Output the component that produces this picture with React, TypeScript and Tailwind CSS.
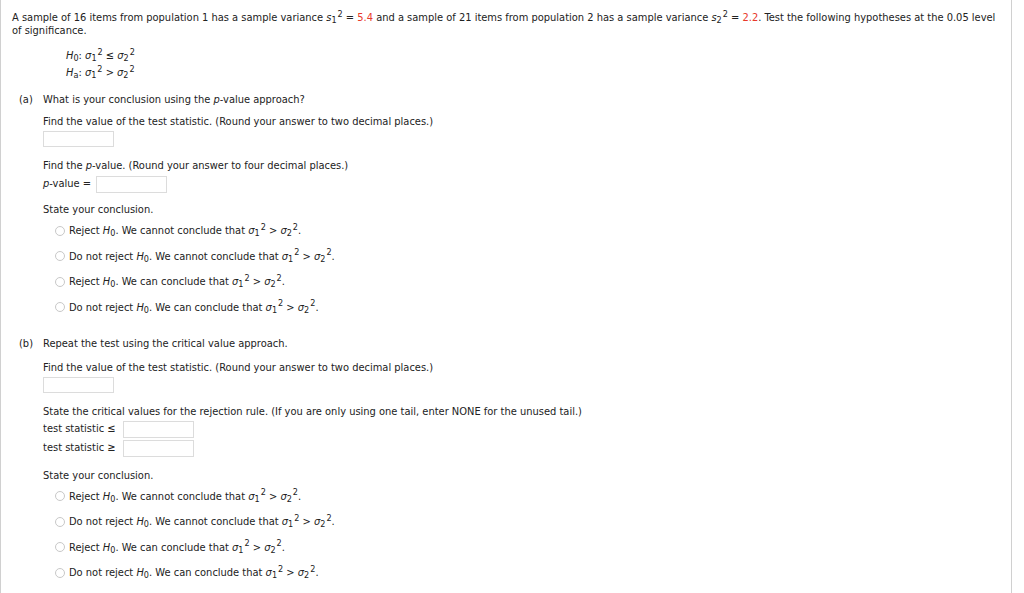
import React from "react";

const Sig = ({ sub }: { sub: string }) => (
  <span className="whitespace-nowrap">
    <i>σ</i>
    <sub className="text-[9px]">{sub}</sub>
    <sup className="ml-px text-[9px]">2</sup>
  </span>
);

const H = ({ sub }: { sub: string }) => (
  <span className="whitespace-nowrap">
    <i>H</i>
    <sub className="text-[9px]">{sub}</sub>
  </span>
);

const Input = ({ className = "" }: { className?: string }) => (
  <div className={`h-[16px] w-[71px] shrink-0 border border-[#dcdcdc] bg-white ${className}`} />
);

const options = [
  ["Reject", "We cannot conclude that"],
  ["Do not reject", "We cannot conclude that"],
  ["Reject", "We can conclude that"],
  ["Do not reject", "We can conclude that"],
];

const Conclusion = () => (
  <div>
    <div className="h-[13px] leading-[13px]">State your conclusion.</div>
    <div className="mt-[6px] flex flex-col gap-[8.5px] pl-[12px]">
      {options.map(([a, b], i) => (
        <div key={i} className="flex h-[17px] items-center">
          <span className="mr-[4px] inline-block size-[10px] shrink-0 rounded-full border border-[#c8c8c8] bg-white" />
          <span className="whitespace-nowrap leading-[17px]">
            {a} <H sub="0" />. {b} <Sig sub="1" /> &gt; <Sig sub="2" />.
          </span>
        </div>
      ))}
    </div>
  </div>
);

export default function App() {
  return (
    <div
      className="min-h-[593px] w-[1012px] border-l border-r border-[#d0d0d0] bg-white pl-[11px] pr-[8px] pt-[11px] text-[11px] text-[#222]"
      style={{ fontFamily: '"DejaVu Sans Condensed", "DejaVu Sans", Verdana, sans-serif' }}
    >
      <p className="leading-[13px]">
        A sample of 16 items from population 1 has a sample variance <i>s</i>
        <sub className="text-[9px]">1</sub>
        <sup className="ml-px text-[9px]">2</sup> = <span className="text-[#e8392b]">5.4</span> and a sample of 21
        items from population 2 has a sample variance <i>s</i>
        <sub className="text-[9px]">2</sub>
        <sup className="ml-px text-[9px]">2</sup> = <span className="text-[#e8392b]">2.2</span>. Test the following
        hypotheses at the 0.05 level of significance.
      </p>

      <div className="mt-[10px] pl-[54px] leading-[17px]">
        <div>
          <H sub="0" />: <Sig sub="1" /> ≤ <Sig sub="2" />
        </div>
        <div>
          <H sub="a" />: <Sig sub="1" /> &gt; <Sig sub="2" />
        </div>
      </div>

      <div className="mt-[12px] flex leading-[13px]">
        <span className="w-[31px] shrink-0 pl-[7px]">(a)</span>
        <span>
          What is your conclusion using the <i>p</i>-value approach?
        </span>
      </div>

      <div className="pl-[31px]">
        <div className="mt-[9px] leading-[13px]">
          Find the value of the test statistic. (Round your answer to two decimal places.)
        </div>
        <Input className="mt-[3px]" />

        <div className="mt-[12px] leading-[13px]">
          Find the <i>p</i>-value. (Round your answer to four decimal places.)
        </div>
        <div className="mt-[4px] flex h-[17px] items-center">
          <span className="whitespace-nowrap">
            <i>p</i>-value =
          </span>
          <Input className="ml-[5px] h-[17px]" />
        </div>

        <div className="mt-[10px]">
          <Conclusion />
        </div>
      </div>

      <div className="mt-[21px] flex leading-[13px]">
        <span className="w-[31px] shrink-0 pl-[7px]">(b)</span>
        <span>Repeat the test using the critical value approach.</span>
      </div>

      <div className="pl-[31px]">
        <div className="mt-[11px] leading-[13px]">
          Find the value of the test statistic. (Round your answer to two decimal places.)
        </div>
        <Input className="mt-[3px]" />

        <div className="mt-[12px] leading-[13px]">
          State the critical values for the rejection rule. (If you are only using one tail, enter NONE for the unused
          tail.)
        </div>
        <div className="mt-[3px] flex h-[17px] items-center">
          <span className="w-[80px] shrink-0 whitespace-nowrap">test statistic ≤</span>
          <Input className="h-[17px]" />
        </div>
        <div className="mt-[2px] flex h-[17px] items-center">
          <span className="w-[80px] shrink-0 whitespace-nowrap">test statistic ≥</span>
          <Input className="h-[17px]" />
        </div>

        <div className="mt-[12px]">
          <Conclusion />
        </div>
      </div>
    </div>
  );
}
